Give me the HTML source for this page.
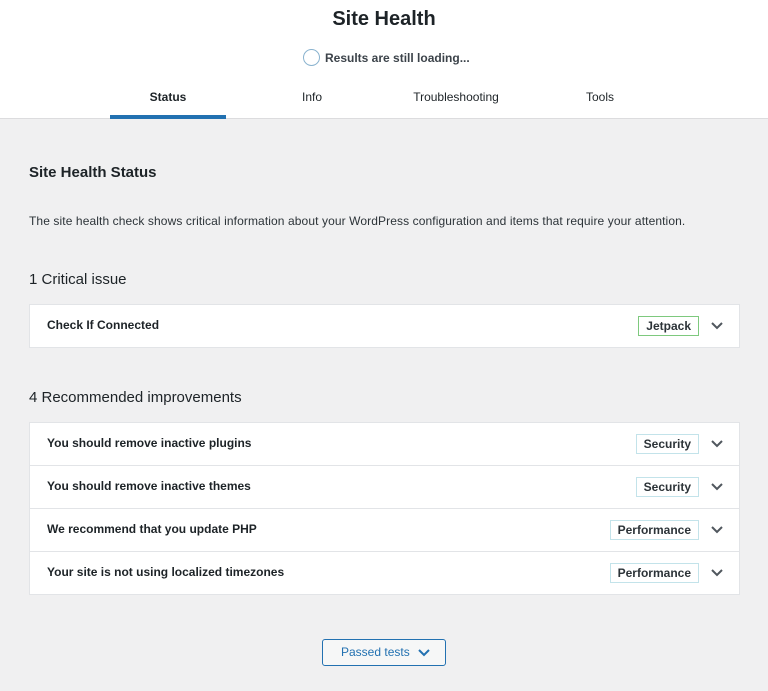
<!DOCTYPE html><html><head><style>
body{margin:0;width:768px;height:691px;background:#f0f0f1;font-family:"Liberation Sans",sans-serif;color:#1d2327;position:relative;overflow:hidden}
.hdr{position:absolute;left:0;top:0;width:768px;height:118px;background:#fff;border-bottom:1px solid #dcdcde}
.a{position:absolute}
.tab{position:absolute;top:90px;font-size:12px;text-align:center}
.panel{position:absolute;left:29px;width:709px;background:#fff;border:1px solid #e2e4e7}
.row{position:relative;height:42px;border-top:1px solid #e2e4e7}
.row:first-child{border-top:none}
.row .t{position:absolute;left:17px;top:13px;font-size:12px;font-weight:bold}
.badge{position:absolute;top:11px;height:18px;line-height:18px;font-size:12px;font-weight:bold;padding:0 7px;border:1px solid #c3e3ea;color:#2c3338}
.chev{position:absolute;right:15px;top:16px}
</style></head><body>
<div class="hdr">
<div class="a" style="left:0;width:768px;top:8px;text-align:center;font-size:20px;font-weight:bold">Site Health</div>
<div class="a" style="left:303px;top:49px;width:15px;height:15px;border:1.5px solid #8ab3cf;border-radius:50%"></div>
<div class="a" style="left:325px;top:51px;font-size:12px;font-weight:bold;color:#3c434a">Results are still loading...</div>
<div class="tab" style="left:110px;width:116px;font-weight:bold">Status</div>
<div class="tab" style="left:282px;width:60px">Info</div>
<div class="tab" style="left:396px;width:120px">Troubleshooting</div>
<div class="tab" style="left:570px;width:60px">Tools</div>
<div class="a" style="left:110px;top:115px;width:116px;height:4px;background:#2271b1"></div>
</div>
<div class="a" style="left:29px;top:164px;font-size:15px;font-weight:bold">Site Health Status</div>
<div class="a" style="left:29px;top:214px;font-size:12px;color:#2c3338;letter-spacing:0.1px">The site health check shows critical information about your WordPress configuration and items that require your attention.</div>
<div class="a" style="left:29px;top:271px;font-size:15px">1 Critical issue</div>
<div class="panel" style="top:304px">
<div class="row"><div class="t">Check If Connected</div><div class="badge" style="right:40px;border-color:#7ec97e">Jetpack</div><svg class="chev" width="14" height="10" viewBox="0 0 14 10"><path d="M2 2l5 5 5-5" fill="none" stroke="#50575e" stroke-width="2"/></svg></div>
</div>
<div class="a" style="left:29px;top:389px;font-size:15px">4 Recommended improvements</div>
<div class="panel" style="top:422px">
<div class="row"><div class="t">You should remove inactive plugins</div><div class="badge" style="right:40px">Security</div><svg class="chev" width="14" height="10" viewBox="0 0 14 10"><path d="M2 2l5 5 5-5" fill="none" stroke="#50575e" stroke-width="2"/></svg></div>
<div class="row"><div class="t">You should remove inactive themes</div><div class="badge" style="right:40px">Security</div><svg class="chev" width="14" height="10" viewBox="0 0 14 10"><path d="M2 2l5 5 5-5" fill="none" stroke="#50575e" stroke-width="2"/></svg></div>
<div class="row"><div class="t">We recommend that you update PHP</div><div class="badge" style="right:40px">Performance</div><svg class="chev" width="14" height="10" viewBox="0 0 14 10"><path d="M2 2l5 5 5-5" fill="none" stroke="#50575e" stroke-width="2"/></svg></div>
<div class="row"><div class="t">Your site is not using localized timezones</div><div class="badge" style="right:40px">Performance</div><svg class="chev" width="14" height="10" viewBox="0 0 14 10"><path d="M2 2l5 5 5-5" fill="none" stroke="#50575e" stroke-width="2"/></svg></div>
</div>
<div class="a" style="left:322px;top:639px;width:122px;height:25px;border:1px solid #2271b1;border-radius:3px;background:#f6f7f7;color:#2271b1;font-size:12px;line-height:25px;box-sizing:content-box"><span style="position:absolute;left:18px">Passed tests</span><svg style="position:absolute;left:94px;top:8px" width="14" height="10" viewBox="0 0 14 10"><path d="M2 2l5 5 5-5" fill="none" stroke="#2271b1" stroke-width="2"/></svg></div>
</body></html>
